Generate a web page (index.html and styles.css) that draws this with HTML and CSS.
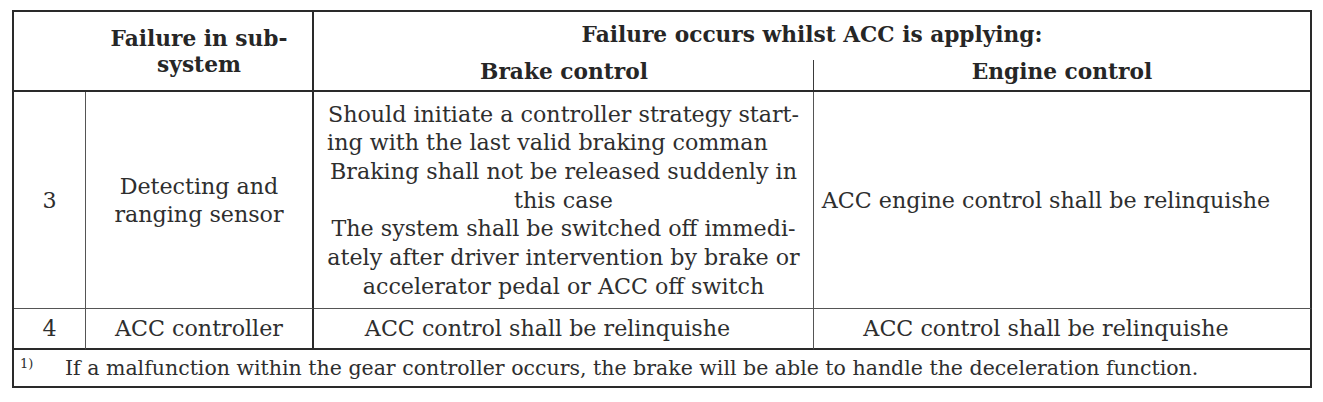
FILE: index.html
```html
<!DOCTYPE html>
<html lang="en">
<head>
<meta charset="utf-8">
<title>ACC failure table</title>
<link rel="stylesheet" href="styles.css">
</head>
<body>
<div class="tbl">
  <div class="c h-num"></div>
  <div class="c h-sub bold"><span>Failure in sub-<br>system</span></div>
  <div class="c h-occ bold">Failure occurs whilst ACC is applying:</div>
  <div class="c h-brake bold">Brake control</div>
  <div class="c h-engine bold">Engine control</div>

  <div class="c r3 col1">3</div>
  <div class="c r3 col2 two"><div>Detecting and<br>ranging sensor</div></div>
  <div class="c r3 col3"><div>Should initiate a controller strategy start-<br><span class="cut">ing with the last valid braking comman</span><br>Braking shall not be released suddenly in<br>this case<br>The system shall be switched off immedi-<br>ately after driver intervention by brake or<br>accelerator pedal or ACC off switch</div></div>
  <div class="c r3 col4"><span class="cut">ACC engine control shall be relinquishe</span></div>

  <div class="c r4 col1">4</div>
  <div class="c r4 col2">ACC controller</div>
  <div class="c r4 col3"><span class="cut">ACC control shall be relinquishe</span></div>
  <div class="c r4 col4"><span class="cut">ACC control shall be relinquishe</span></div>

  <div class="c foot"><sup class="fn">1)</sup><span class="fntext">If a malfunction within the gear controller occurs, the brake will be able to handle the deceleration function.</span></div>
</div>
</body>
</html>
```
FILE: styles.css
```css
* { box-sizing: border-box; }
html, body { margin: 0; padding: 0; background: #fff; }
body {
  font-family: "DejaVu Serif", "Liberation Serif", serif;
  color: #2e2e2e;
  font-size: 22.2px;
}
.tbl {
  margin: 10px 0 0 12px;
  width: 1300px;
  display: grid;
  grid-template-columns: 72px 228px 500px 498px;
  grid-template-rows: 44px 36px 217px 41px 38px;
  border-top: 2px solid #2a2a2a;
  border-left: 2px solid #2a2a2a;
}
.c {
  display: flex;
  align-items: center;
  justify-content: center;
  text-align: center;
  line-height: 28.7px;
  white-space: nowrap;
}
.cut { display: inline-block; padding-right: 32px; }
.bold { font-weight: bold; color: #262626; font-size: 21.7px; }
.h-num { grid-column: 1; grid-row: 1 / 3; border-bottom: 2px solid #2a2a2a; }
.h-sub { grid-column: 2; grid-row: 1 / 3; border-bottom: 2px solid #2a2a2a; border-right: 2px solid #2a2a2a; line-height: 26px; padding-top: 2px; }
.h-occ { grid-column: 3 / 5; grid-row: 1; border-right: 2px solid #2a2a2a; padding-top: 2px; }
.h-brake {
  grid-column: 3; grid-row: 2;
  border-bottom: 2px solid #2a2a2a;
  padding-bottom: 2px;
  position: relative;
}
.h-brake::after {
  content: "";
  position: absolute;
  right: 0; top: 4px; bottom: 0;
  width: 1px;
  background: #3a3a3a;
}
.h-engine { grid-column: 4; grid-row: 2; border-right: 2px solid #2a2a2a; border-bottom: 2px solid #2a2a2a; padding-bottom: 2px; }

.col1 { grid-column: 1; border-right: 1px solid #555; }
.col2 { grid-column: 2; border-right: 2px solid #2a2a2a; }
.col3 { grid-column: 3; border-right: 1px solid #555; }
.col4 { grid-column: 4; border-right: 2px solid #2a2a2a; }
.r3 { grid-row: 3; border-bottom: 1px solid #555; }
.r4 { grid-row: 4; border-bottom: 2px solid #2a2a2a; }
.two { line-height: 28px; }

.foot {
  grid-column: 1 / 5;
  grid-row: 5;
  border-right: 2px solid #2a2a2a;
  border-bottom: 2px solid #2a2a2a;
  justify-content: flex-start;
  text-align: left;
  padding-left: 6px;
  font-size: 20.5px;
}
.fn { font-size: 13px; line-height: 1; align-self: flex-start; margin-top: 7px; width: 45px; }
```
